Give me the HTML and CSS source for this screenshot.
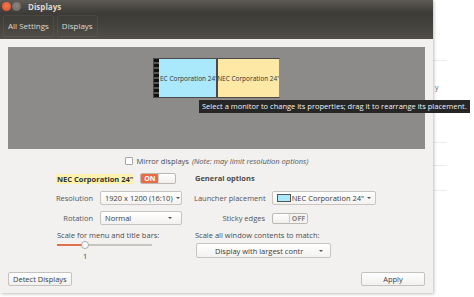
FILE: index.html
```html
<!DOCTYPE html>
<html lang="en">
<head>
    <meta charset="UTF-8">
    <title>Displays</title>
    <link rel="stylesheet" href="styles.css">
</head>
<body>
    <div class="window">
        <div class="headerbar">
            <div class="titlebar">
                <span class="wbtn close"></span>
                <span class="wbtn minimize"></span>
                <span class="title">Displays</span>
            </div>
            <div class="toolbar">
                <span class="tb-btn">All Settings</span>
                <span class="tb-btn">Displays</span>
            </div>
        </div>

        <div class="content">
            <div class="arrange">
                <div class="monitor mon-left">
                    <span class="handle"></span>
                    <span class="mon-name">EC Corporation 24"</span>
                </div>
                <div class="monitor mon-right">
                    <span class="mon-name">NEC Corporation 24"</span>
                </div>
                <div class="tooltip">Select a monitor to change its properties; drag it to rearrange its placement.</div>
            </div>

            <div class="mirror">
                <span class="checkbox"></span>
                <span>Mirror displays</span>
                <em>(Note: may limit resolution options)</em>
            </div>

            <div class="options">
                <div class="col col-left">
                    <div class="monitor-head">
                        <span class="mon-title">NEC Corporation 24"</span>
                        <span class="switch on"><span class="sw-label">ON</span><span class="knob"></span></span>
                    </div>
                    <div class="row">
                        <span class="label">Resolution</span>
                        <span class="combo combo-small">1920 x 1200 (16:10)<span class="arrow"></span></span>
                    </div>
                    <div class="row">
                        <span class="label">Rotation</span>
                        <span class="combo combo-small combo-wide">Normal<span class="arrow"></span></span>
                    </div>
                    <div class="scale-label">Scale for menu and title bars:</div>
                    <div class="slider">
                        <span class="track"><span class="fill"></span><span class="thumb"></span></span>
                    </div>
                    <div class="slider-value">1</div>
                </div>

                <div class="col col-right">
                    <div class="section-title">General options</div>
                    <div class="row">
                        <span class="label label-right">Launcher placement</span>
                        <span class="combo combo-launcher"><span class="swatch"></span>NEC Corporation 24"<span class="arrow"></span></span>
                    </div>
                    <div class="row">
                        <span class="label label-right">Sticky edges</span>
                        <span class="switch off"><span class="knob"></span><span class="sw-label">OFF</span></span>
                    </div>
                    <div class="scale-label">Scale all window contents to match:</div>
                    <span class="combo combo-scale">Display with largest contr<span class="arrow"></span></span>
                </div>
            </div>

            <div class="footer">
                <button class="btn">Detect Displays</button>
                <button class="btn btn-apply">Apply</button>
            </div>
        </div>
    </div>

    <div class="behind">
        <div class="bg-row" style="height: 61px"></div>
        <div class="bg-row" style="height: 43px"><span class="bg-text">y</span></div>
        <div class="bg-row" style="height: 39px"></div>
        <div class="bg-row" style="height: 23px"></div>
        <div class="bg-row" style="height: 25px"></div>
    </div>
</body>
</html>
```

FILE: styles.css
```css
body {
    margin: 0;
    width: 474px;
    height: 297px;
    overflow: hidden;
    background-color: #fff;
    font-family: "Open Sans", sans-serif;
    font-size: 7.5px;
    color: #3c3c3c;
    display: flex;
}
.window {
    width: 433px;
    height: 293px;
    flex-shrink: 0;
    display: flex;
    flex-direction: column;
    background-color: #f2f1f0;
    box-shadow: 1px 1px 3px rgba(0,0,0,0.25);
    position: relative;
    z-index: 1;
}
.headerbar {
    height: 39px;
    color: #dfdbd2;
    background: linear-gradient(#5e5a54 0, #46443f 9px, #3c3b37 14px, #45433e 26px, #514e48 39px);
}
.titlebar {
    height: 13px;
    display: flex;
    align-items: center;
    padding-left: 2px;
}
.wbtn {
    width: 9px;
    height: 9px;
    border-radius: 50%;
    margin-right: 1px;
}
.wbtn.close {
    background: radial-gradient(circle at 50% 40%, #f47a52, #df4b24);
}
.wbtn.minimize {
    background: radial-gradient(circle at 50% 40%, #8a8782, #68655f);
}
.title {
    margin-left: 6px;
    font-weight: bold;
    font-size: 8px;
}
.toolbar {
    height: 26px;
    display: flex;
    align-items: center;
    gap: 3px;
    padding-left: 3px;
}
.tb-btn {
    height: 20px;
    line-height: 20px;
    padding: 0 4px;
    border: 1px solid rgba(255,255,255,0.06);
    border-radius: 2px;
    font-size: 8px;
}
.content {
    flex-grow: 1;
    display: flex;
    flex-direction: column;
    padding: 8px 8px 7px;
}
.arrange {
    height: 102px;
    background-color: #8c8b8a;
    position: relative;
}
.monitor {
    position: absolute;
    top: 11px;
    height: 40px;
    box-sizing: border-box;
    border: 1px solid #4a4a4a;
    display: flex;
    align-items: center;
    overflow: hidden;
    font-size: 6.5px;
    color: #333;
    white-space: nowrap;
}
.mon-left {
    left: 145px;
    width: 64px;
    background-color: #a9e9fb;
}
.mon-right {
    left: 209px;
    width: 63px;
    background-color: #fde8a6;
    border-right: 1px solid #d9733f;
    justify-content: center;
}
.handle {
    width: 5px;
    height: 100%;
    flex-shrink: 0;
    background: repeating-linear-gradient(#111 0, #111 3px, #555 3px, #555 5px);
    margin-right: 1px;
}
.tooltip {
    position: absolute;
    left: 191px;
    top: 53px;
    height: 13px;
    line-height: 13px;
    padding: 0 3px;
    background-color: #262626;
    color: #f2f2f2;
    white-space: nowrap;
    font-size: 7.5px;
}
.mirror {
    height: 11px;
    margin-top: 6px;
    display: flex;
    align-items: center;
    justify-content: center;
    gap: 3px;
    color: #4c4c4c;
}
.mirror em {
    color: #555;
}
.checkbox {
    width: 6px;
    height: 6px;
    border: 1px solid #a8a6a2;
    border-radius: 1px;
    background-color: #fff;
    margin-right: 1px;
}
.options {
    display: flex;
    margin-top: 6px;
}
.col {
    display: flex;
    flex-direction: column;
}
.col-left {
    width: 186px;
    flex-shrink: 0;
}
.monitor-head {
    height: 13px;
    display: flex;
    align-items: center;
    padding-left: 48px;
    gap: 6px;
}
.mon-title {
    font-weight: bold;
    background-color: #fdf2ae;
    padding: 0 1px;
    color: #333;
}
.switch {
    height: 11px;
    width: 36px;
    flex-shrink: 0;
    box-sizing: border-box;
    border: 1px solid #bcb8b2;
    border-radius: 2px;
    display: flex;
    overflow: hidden;
    font-size: 7px;
}
.sw-label {
    width: 17px;
    display: flex;
    align-items: center;
    justify-content: center;
    font-weight: bold;
}
.switch.on .sw-label {
    background-color: #ea6a43;
    color: #fff;
}
.switch.off .sw-label {
    color: #8a8782;
    background-color: #f4f3f2;
}
.knob {
    flex-grow: 1;
    background: linear-gradient(#fff, #f0efee);
    border-left: 1px solid #cfcbc6;
    border-radius: 2px;
}
.switch.off .knob {
    border-left: 0;
    border-right: 1px solid #cfcbc6;
}
.row {
    height: 14px;
    margin-top: 6px;
    display: flex;
    align-items: center;
    gap: 7px;
}
.label {
    width: 85px;
    flex-shrink: 0;
    text-align: right;
    white-space: nowrap;
    color: #555;
}
.label-right {
    width: 71px;
}
.combo {
    height: 14px;
    flex-shrink: 0;
    box-sizing: border-box;
    border: 1px solid #c8c5c0;
    border-radius: 2px;
    background: linear-gradient(#fff, #f3f2f1);
    display: flex;
    align-items: center;
    padding: 0 4px;
    color: #3c3c3c;
    white-space: nowrap;
}
.combo-small {
    width: 82px;
}
.combo-wide .arrow {
    margin-left: auto;
    margin-right: 5px;
}
.arrow {
    width: 0;
    height: 0;
    border-left: 2px solid transparent;
    border-right: 2px solid transparent;
    border-top: 2.5px solid #555;
    margin-left: 3px;
}
.scale-label {
    height: 10px;
    line-height: 10px;
    margin-top: 5px;
    color: #4c4c4c;
}
.col-left .scale-label {
    padding-left: 49px;
}
.slider {
    height: 8px;
    margin-top: 1px;
    padding-left: 49px;
    display: flex;
    align-items: center;
}
.track {
    width: 95px;
    height: 2px;
    background-color: #c8c5c1;
    display: flex;
    align-items: center;
}
.fill {
    width: 26px;
    height: 2px;
    background-color: #e0704b;
}
.thumb {
    width: 6px;
    height: 6px;
    border: 1px solid #a9a6a1;
    border-radius: 50%;
    background-color: #fff;
    margin-left: -2px;
}
.slider-value {
    height: 10px;
    line-height: 10px;
    margin-top: 2px;
    padding-left: 75px;
    color: #444;
}
.col-right {
    flex-grow: 1;
}
.section-title {
    height: 13px;
    line-height: 13px;
    padding-left: 1px;
    font-weight: bold;
    color: #4a4a4a;
}
.combo-launcher {
    width: 104px;
}
.swatch {
    width: 15px;
    height: 6px;
    border: 1px solid #555;
    background-color: #a9e9fb;
    margin-right: 1px;
}
.col-right .scale-label {
    padding-left: 1px;
}
.combo-scale {
    width: 135px;
    height: 15px;
    margin-top: 3px;
    margin-left: 2px;
    padding-left: 18px;
}
.combo-scale .arrow {
    margin-left: auto;
    margin-right: 3px;
}
.footer {
    margin-top: auto;
    display: flex;
    justify-content: space-between;
}
.btn {
    height: 14px;
    padding: 0 4px;
    border: 1px solid #c5c2bd;
    border-radius: 2px;
    background: linear-gradient(#fff, #f1f0ef);
    font-family: "Open Sans", sans-serif;
    font-size: 7.5px;
    color: #3c3c3c;
}
.btn-apply {
    width: 64px;
}
.behind {
    flex-grow: 1;
    display: flex;
    flex-direction: column;
}
.bg-row {
    width: 14px;
    border-bottom: 1px solid #ececec;
    box-sizing: border-box;
    position: relative;
}
.bg-text {
    position: absolute;
    left: 2px;
    top: 22px;
    font-size: 7px;
    color: #666;
}
```
